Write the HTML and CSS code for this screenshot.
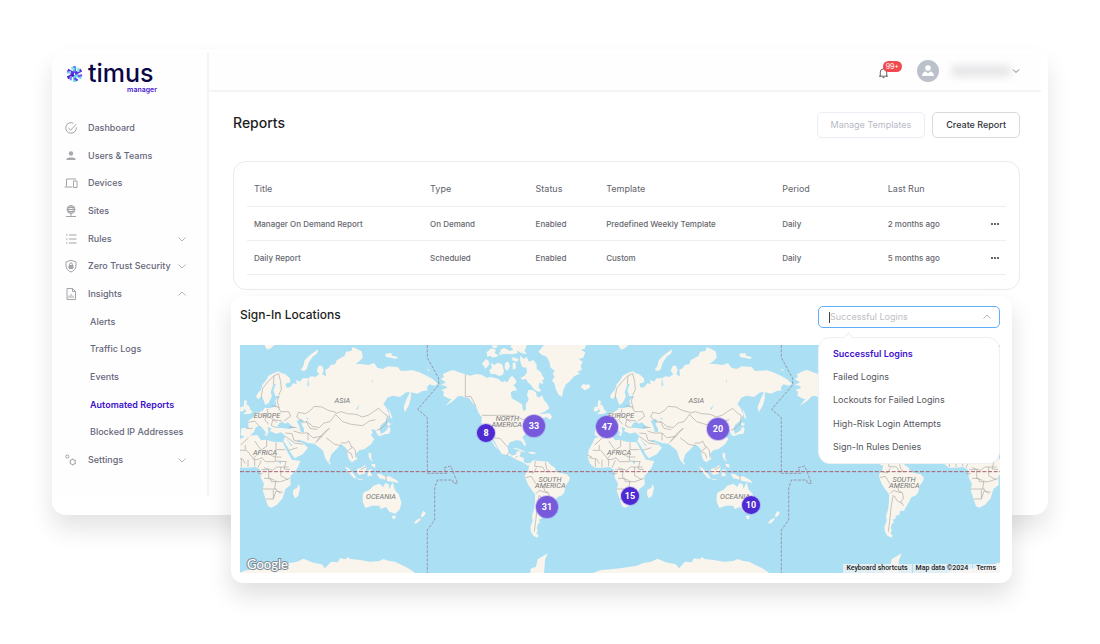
FILE: index.html
```html
<!DOCTYPE html>
<html lang="en">
<head>
<meta charset="utf-8">
<meta name="viewport" content="width=device-width, initial-scale=1">
<title>Timus Manager – Reports</title>
<link rel="stylesheet" href="styles.css">
</head>
<body>
<div class="stage">
  <div class="app">
    <aside class="sidebar">
      <a class="logo" href="#">
        <svg class="logo-mark" viewBox="0 0 54 56" aria-hidden="true">
          <g stroke-width="10" fill="none">
            <path d="M27 25V3" stroke="#6a7df0"/><path d="M27 31V53" stroke="#62dfe2"/>
            <path d="M25 27L5 16" stroke="#5a34e0"/><path d="M29 29L49 40" stroke="#6fd4ee"/>
            <path d="M25 29L5 40" stroke="#4a24c8"/><path d="M29 27L49 16" stroke="#5a34e0"/>
          </g>
          <g stroke-width="7" fill="none">
            <path d="M17 7l10 8" stroke="#78e8e6"/><path d="M27 41l10 8" stroke="#5b48e8"/>
            <path d="M3 25l13-4" stroke="#86c8f4"/><path d="M38 35l13-4" stroke="#7a5af0"/>
            <path d="M15 34v14" stroke="#8b7bf5"/><path d="M39 22V8" stroke="#86eee0"/>
          </g>
        </svg>
        <span class="logo-text">timus</span>
        <span class="logo-sub">manager</span>
      </a>
      <nav>
        <ul class="nav">
          <li><a href="#"><svg viewBox="0 0 14 14"><path d="M12.3 6.3A5.3 5.3 0 1 1 9.4 2.200M4.400 7l2.200 2.200L12.300 3.200"/></svg>Dashboard</a></li>
          <li><a href="#"><svg class="solid" viewBox="0 0 14 14"><circle cx="7" cy="4.500" r="2.200"/><path d="M2.500 11V10c0-2 9-2 9 0v1z"/></svg>Users &amp; Teams</a></li>
          <li><a href="#"><svg viewBox="0 0 14 14"><path d="M12 3H2.500v7.500M.5 11H8.500M9.500 5h3.500v6.500H9.500z"/></svg>Devices</a></li>
          <li><a href="#"><svg viewBox="0 0 14 14"><circle cx="7" cy="5.500" r="4"/><path d="M3 5.500h8M4 3.500h6M4 7.500h6M7 1.500c-3 2-3 6 0 8 3-2 3-6 0-8M7 9.500v3M2 12.500h10"/></svg>Sites</a></li>
          <li><a href="#"><svg viewBox="0 0 14 14"><path d="M5 3h7.500M5 7h7.500M5 11h7.500M2 3h1.500M2 7h1.500M2 11h1.500"/></svg>Rules<svg class="chev" viewBox="0 0 10 10"><path d="M1.500 3.500L5 7l3.500-3.500"/></svg></a></li>
          <li><a href="#"><svg viewBox="0 0 14 14"><path d="M7 1.200L12 3v4c0 3-2.500 5-5 6-2.500-1-5-3-5-6V3z"/><path class="fill" d="M5 6.500h4v3H5z"/><path d="M5.700 6.500V5c0-1.500 2.600-1.500 2.600 0v1.500"/></svg>Zero Trust Security<svg class="chev" viewBox="0 0 10 10"><path d="M1.500 3.500L5 7l3.500-3.500"/></svg></a></li>
          <li><a href="#"><svg viewBox="0 0 14 14"><path d="M3 1.500h5.500L11.500 4.500v8H3zM8.500 1.500v3h3M5 11V8.500M7 11V7M9 11V8.500"/></svg>Insights<svg class="chev" viewBox="0 0 10 10"><path d="M1.500 6.500L5 3l3.500 3.500"/></svg></a></li>
          <li class="sub"><a href="#">Alerts</a></li>
          <li class="sub"><a href="#">Traffic Logs</a></li>
          <li class="sub"><a href="#">Events</a></li>
          <li class="sub current"><a href="#" aria-current="page">Automated Reports</a></li>
          <li class="sub"><a href="#">Blocked IP Addresses</a></li>
          <li><a href="#"><svg viewBox="0 0 14 14"><circle cx="3.300" cy="3.500" r="1.600"/><circle cx="8.700" cy="9" r="2.600"/><path d="M8.700 5.500v1M8.700 11.500v1M5.700 7.300l.8.400M10.900 10.300l.9.500M5.700 10.800l.8-.5M10.900 7.700l.9-.5"/></svg>Settings<svg class="chev" viewBox="0 0 10 10"><path d="M1.500 3.500L5 7l3.500-3.500"/></svg></a></li>
        </ul>
      </nav>
    </aside>
    <div class="content">
      <header class="topbar">
        <button class="bell" aria-label="Notifications">
          <svg viewBox="0 0 12 13"><path d="M1 10h10M2.500 10V5.500a3.500 3.500 0 0 1 7 0V10M5 11.500h2M6 1v1"/></svg>
          <span class="badge">99+</span>
        </button>
        <button class="account" aria-label="Account">
          <svg class="avatar" viewBox="0 0 22 22"><circle cx="11" cy="11" r="11" fill="#bcc0ca"/><circle cx="11" cy="8" r="2.800" fill="#fff"/><path d="M5 16c0-3 2-4.300 4-4.500l2 2 2-2c2 .2 4 1.500 4 4.500z" fill="#fff"/></svg>
          <span class="masked"></span>
          <svg class="chev dark" viewBox="0 0 10 10"><path d="M2 3.500L5 6.500l3-3"/></svg>
        </button>
      </header>
      <main class="main">
        <div class="heading">
          <h1>Reports</h1>
          <div class="actions">
            <button class="btn" disabled>Manage Templates</button>
            <button class="btn">Create Report</button>
          </div>
        </div>
        <section class="table-card">
          <table>
            <thead><tr><th class="c-wide">Title</th><th class="c-mid">Type</th><th class="c-slim">Status</th><th class="c-wide">Template</th><th class="c-mid">Period</th><th>Last Run</th><td class="c-more"></td></tr></thead>
            <tbody>
              <tr><td>Manager On Demand Report</td><td>On Demand</td><td>Enabled</td><td>Predefined Weekly Template</td><td>Daily</td><td>2 months ago</td><td><button class="more" aria-label="More actions"><i></i><i></i><i></i></button></td></tr>
              <tr><td>Daily Report</td><td>Scheduled</td><td>Enabled</td><td>Custom</td><td>Daily</td><td>5 months ago</td><td><button class="more" aria-label="More actions"><i></i><i></i><i></i></button></td></tr>
            </tbody>
          </table>
        </section>
      </main>
    </div>
  </div>

  <section class="panel">
    <div class="panel-head">
      <h2>Sign-In Locations</h2>
      <div class="combo">
        <label class="combo-field">
          <span class="caret"></span>
          <input type="text" role="combobox" aria-expanded="true" aria-controls="login-menu" aria-label="Login type" placeholder="Successful Logins">
          <svg class="chev" viewBox="0 0 10 10"><path d="M1.500 6.500L5 3l3.500 3.500"/></svg>
        </label>
        <ul class="menu" id="login-menu">
          <li><button class="chosen">Successful Logins</button></li>
          <li><button>Failed Logins</button></li>
          <li><button>Lockouts for Failed Logins</button></li>
          <li><button>High-Risk Login Attempts</button></li>
          <li><button>Sign-In Rules Denies</button></li>
        </ul>
      </div>
    </div>
    <div class="map">
      <svg class="world" viewBox="0 0 2280 684" preserveAspectRatio="xMinYMin slice" role="img" aria-label="World map">
        <defs>
          <g id="tile">
            <!-- The Americas -->
            <g transform="translate(540 -30)">
              <g class="land">
                <path d="M62 132L72 125 68 118 88 108 100 105 112 110 136 118 150 122 168 117 185 119 200 128 215 126 235 132 247 142 255 138 262 142 270 128 276 122 284 130 290 142 279 152 283 164 272 172 275 190 290 198 306 208 310 228 318 224 317 208 326 194 321 180 325 165 338 165 348 172 350 184 358 188 366 180 372 196 380 204 388 220 374 230 356 236 368 236 384 236 396 246 390 254 380 246 368 250 355 256 340 262 334 275 325 281 318 295 307 306 318 328 314 334 304 318 290 315 270 322 262 335 266 352 275 362 286 359 292 349 303 349 299 365 311 368 312 382 322 385 333 384 324 392 308 382 285 372 270 362 245 356 232 335 222 315 213 308 225 328 235 345 224 334 212 312 200 302 188 280 184 262 186 247 175 232 168 215 156 202 148 190 138 188 125 183 113 184 108 190 96 200 76 213 94 193 84 190 70 182 72 170 64 165 82 158 76 152 62 150 78 142z"/>
                <path d="M328 386L340 375 350 377 365 378 385 381 392 390 405 398 408 410 422 414 440 418 450 428 446 440 436 452 433 472 426 481 412 487 405 500 396 516 390 527 378 528 376 540 364 542 366 550 356 554 360 562 354 566 350 580 354 586 349 594 356 602 352 608 340 602 333 590 331 576 338 558 336 542 342 524 345 500 345 478 336 466 325 450 314 425 319 412 325 405z"/>
                <path d="M372 30H498L494 42 482 44 496 52 490 68 476 72 488 80 482 92 486 104 472 110 480 116 462 124 448 140 438 148 430 165 426 185 416 180 408 164 404 148 396 136 404 126 398 116 404 108 392 98 388 80 380 65 366 60 355 50z"/>
                <path d="M485 152l4-5 9 2 9-1 4 7-6 6-11 5-7-6-4-1zM300 62l12 10 8-6 7 14 14-5 9 14 0 13 12 10 6 12 6 8-8 4 4 12-12-5-2 14 8 11-10 2-13-8-8-12-10-8-4-10-12 2-5-6 12-6 7-10-2-14-12-2-6-16zM212 84l12 6 8-7 14 5 6 20-4 12-12 3-10-6-14 0-4-12 8-6zM186 86l12-14 8 6 2 10-12 14-4-8zM255 84l10-4 5 14-8 14-8-8zM278 84l8-2 2 18-10 4zM240 46l12-8 18 10 16-6 8 12-18 4-16-2-14 2zM200 52l14-12 14 4-4 10 12 8-16 6-10-6-8 4zM278 66l18 6-4 8-16-4zM270 34l8-4h42l-6 18 6 10-16-4-10-6-8 2zM215 31h18l-4 9-10-2zM236 52l10 2-4 8zM272 148l12 6 8 12-12 2zM278 340l10-1 14 5 17 6-12 0-14-6zM322 352l14-2 14 5-12 3zM174 230l8 4 8 12-7-2zM378 234l12 2 8 12-12-4zM330 717l2-16 16-6 5-22 30-18-8 20-3 42z"/>
              </g>
              <g class="border">
                <path d="M136 118V186L152 184 168 214M186 241H285L310 255 325 247 345 240M214 308L240 310 262 335M260 362l8-12M285 370l8-8M346 378l-2 16 24 2 8 14 18 0M322 410l18 4 10-16M376 382l4 20 8 6M316 428l18-4 12 20M346 446l24 6 4 16 12 6 2 16-8 12 10 10M348 476l10-10 16 6 10 0M358 480l-6 30-4 40-5 40M385 505l-16-8-8-14"/>
              </g>
              <g class="place"><text x="262" y="257">NORTH</text><text x="260" y="277">AMERICA</text><text x="390" y="440">SOUTH</text><text x="391" y="459">AMERICA</text></g>
            </g>
            <!-- Europe, Africa, Asia, Oceania -->
            <g transform="translate(1080 -30)">
              <g class="land">
                <path d="M30 186L34 176 45 164 50 148 60 136 68 122 84 114 98 109 106 114 118 118 132 130 133 142 118 146 122 158 134 156 142 144 152 148 150 134 162 140 170 130 186 130 196 124 208 126 220 118 212 108 218 92 228 92 233 104 229 118 240 124 238 104 248 100 254 90 268 88 272 76 296 62 300 50 316 48 320 36 334 42 348 50 350 68 338 80 328 86 350 88 368 90 384 84 394 98 410 102 425 94 455 96 465 108 500 106 520 112 542 122 560 132 576 146 566 152 550 148 542 158 546 166 530 168 514 176 495 172 494 192 488 212 476 232 473 215 482 192 492 172 480 172 462 186 440 182 424 188 412 208 420 216 430 238 422 256 405 270 400 282 405 296 396 302 388 285 376 282 380 294 374 300 385 312 375 328 356 342 340 346 330 356 334 372 320 380 326 384 312 378 306 366 302 342 294 334 285 328 272 342 256 358 248 384 240 374 230 346 206 326 186 324 160 314 150 318 170 324 186 338 170 358 146 370 136 356 124 335 112 318 118 304 106 292 90 296 72 288 76 280 64 276 68 292 62 298 54 284 42 272 30 276 24 290 10 304 -4 306 -16 300 -14 280 8 278 6 258 22 246 36 234 52 226 56 218 70 220 92 214 88 196 104 182 88 184 82 166 90 146 82 148 74 172 78 184 68 204 58 210 48 184 38 192z"/>
                <path d="M-16 310L10 302 34 300 45 316 62 314 78 320 110 322 124 350 138 374 163 378 154 400 133 424 134 450 118 462 110 490 92 510 76 518 66 514 58 490 50 465 54 446 45 430 42 404 28 396 6 398 -16 398 -30 386 -37 368 -34 345 -22 324z"/>
                <path d="M350 480L354 472 370 465 382 452 400 446 412 456 418 444 428 448 430 462 440 442 446 464 458 478 466 502 462 522 448 536 430 530 420 516 404 522 400 512 378 512 358 519 350 500zM438 542l12 1-4 10-6-2zM532 527l8 8-10 12-6-4zM526 548l-6 10-10 8-6-2 8-10zM392 416l14 2 8 6 16 0 22 12 6 8-18-4-14-2-14-6-12-2zM296 394l12 6 16 18 8 12-8 0-14-16zM328 430l26 4-10 2zM333 402l14-4 10-8 5 8-6 18-16 4-8-8zM365 406l14-4-6 8 6 14-8-2-6 4zM368 352l8 4 0 16 6 8-8-4-6-10zM376 386l12 2 0 10-10-4zM428 274l6 8-4 14-14 2-14 6-4-4 16-8 8-6zM428 220l6 14 6 20-8-8zM425 262l10 4-4 6-8-2zM142 464l12-6 4-12 4 14-6 24-10 6-5-12zM248 378l7 6-5 6zM164 104l8-10 4-18 16-16 24-17-2 12-14 10-12 18-6 20-8 6zM418 56l18-2 2 8 18 4-6 6-16-4-14-2zM55 30h30l-10 10-12 4zM-5 195l8 3-2 10 8 5 4 12 8 5-8 6-22 2 10-10-8-12zM-16 215l10 0 2 10-10 6-5-5zM54 296l12 2-4 6zM542 102l10 2-4 4z"/>
                <path d="M-30 717L0 706 60 700 110 692 130 684 154 680 172 671 184 676 197 682 227 688 237 700 255 680 275 682 282 670 300 673 305 666 314 672 342 675 372 680 400 678 412 672 430 678 447 680 487 700 512 717z"/>
              </g>
              <g class="sea">
                <path d="M92 278l8-14 10-4 6 6 10-4 8 8 12 8-16 4-14-2zM152 258l14-6 8 6-8 8 8 16 0 10-10-2-4-16zM186 128l4 22-6 6zM120 310l20 22 -4 2zM330 222l12-14-8 16zM378 132l4 10-4-2zM180 250l8-2-2 6z"/>
                <path d="M96 380l10-2-2 10z"/>
              </g>
              <g class="border">
                <path d="M45 190L50 160 66 140 84 122 98 116 104 140 106 164 98 180M84 122l-2 26M98 184l-4 16 6 20M76 212l20 4 8 14 24 0 6 14-20 14M36 232l16 12 14-4 14 14 28 4M64 222l2 18-10 14 12 14M6 262l20-4 14 16M80 254l-4 18 16 6M92 262l-12-10M0 280l20 0M152 246l6-14 20 4 16-10 10-12 24 2 18 10 24 6M152 246l20 16 12-2 16 14 20 4 14-14 18-4 20-26 14-4 18 6 26 2 20 8 18-6 14-10 16-10 14 14 12 8-4 26-18 14-10 4M270 240l20 20 26 8 34 4 20-14 18-4M128 276l24 2M142 288l20 6 24 0 14 14 28-4 12-14 10-10M186 294l0 22M228 304l-20 20M240 308l26 20 20 4M212 318l20-24 18-14M180 258l12 22 22 4M284 324l16 0 8-6 10 20-16 12M318 334l10 12 2 22M118 294l20 2 6 20 18 4M118 304l28 20 26 4M128 346l26-8M304 350l12 6 4 14"/>
                <path d="M-16 330l24-22M-22 346l24 0 20 24 24-24-20-28M-2 344v-14M44 346l18-12 0-20M90 322V344H118M46 346l40 20 20 0M88 344v34l34 2M20 372l14 2 14-6 10 12 30 0M-34 368l24 4 8 14M-14 372v24M6 374v22M26 372v22M46 376l-10 22M-38 360l14 6M54 398l26 8 12-10 36 0M46 404l22 0 0 26 18 6M54 430H74l2 10 28 0M104 396v26l22 12M104 440l28-10M50 462H92M90 436l-4 24 18 16M60 492h22l8-24 20 4M82 492v-28M120 380l-6 22 18 2M36 416h14M344 404l16-8M420 420v16"/>
              </g>
              <g class="place"><text x="289" y="205">ASIA</text><text x="63" y="250">EUROPE</text><text x="57" y="360">AFRICA</text><text x="405" y="493">OCEANIA</text></g>
              <path class="dateline" d="M544 30V68L578 130V150L515 223 544 248V415H602L594 398 614 393 635 445H622L620 435H574L566 460V555L544 585V717"/>
            </g>
          </g>
        </defs>
        <use href="#tile" x="-2124"/><use href="#tile" x="-1062"/><use href="#tile"/><use href="#tile" x="1062"/>
        <path class="equator" d="M0 380H2280"/>
      </svg>
      <button class="pin small" style="left:246px;top:88px">8</button>
      <button class="pin" style="left:294px;top:81px">33</button>
      <button class="pin" style="left:307px;top:162px">31</button>
      <button class="pin" style="left:367px;top:82px">47</button>
      <button class="pin" style="left:478px;top:84px">20</button>
      <button class="pin small" style="left:390px;top:151px">15</button>
      <button class="pin small" style="left:511px;top:160px">10</button>
      <span class="google">Google</span>
      <div class="credits"><button>Keyboard shortcuts</button><span>Map data ©2024</span><a href="#">Terms</a></div>
    </div>
  </section>
</div>
</body>
</html>
```
FILE: styles.css
```css
* { box-sizing: border-box; }
body { margin: 0; background: #fff; color: #55565e; font: 9px/14px Inter, "Open Sans", sans-serif; }
ul { list-style: none; margin: 0; padding: 0; }
a { color: inherit; text-decoration: none; }
button { font: inherit; color: inherit; background: none; border: 0; padding: 0; }
h1, h2 { margin: 0; color: #1d1d22; font-weight: 500; }
svg { display: block; }

.stage { display: grid; grid-template-rows: 246px 219px auto; padding: 50px 52px 60px; }
.app { grid-area: 1 / 1 / 3 / 2; display: flex; background: #fff; border-radius: 14px; box-shadow: 0 14px 24px rgba(0, 0, 0, .11); padding: 2px 7px 19px 0; }
.sidebar { width: 157px; flex: none; background: #fefefe; border-right: 2px solid #f4f4f6; border-top-left-radius: 14px; }
.content { flex: 1; min-width: 0; }

.logo { display: grid; grid-template-columns: 17px 69px; column-gap: 5px; align-items: center; padding: 8px 0 0 14px; }
.logo-mark { width: 17px; height: 18px; margin-top: 2px; }
.logo-text { font: 500 25px/26px Inter, sans-serif; color: #0b0646; }
.logo-sub { grid-column: 2; justify-self: end; color: #4a20d0; font-size: 7px; line-height: 8px; font-weight: 600; }

.nav { display: grid; grid-auto-rows: 1fr; min-height: 360px; margin-top: 20px; color: #66667a; font-weight: 500; }
.nav a { display: flex; align-items: center; height: 100%; padding: 0 20px 0 12px; }
.nav svg { width: 14px; height: 14px; margin-right: 10px; fill: none; stroke: #a3a3a9; stroke-width: 1; }
.nav svg.solid { fill: #a8a8ae; stroke: none; }
.nav .fill { fill: #a3a3a9; }
.nav .chev { margin: 0 0 0 auto; }
.chev, .nav .chev { width: 10px; height: 10px; fill: none; stroke: #b5b5bd; stroke-width: 1; }
.chev.dark { stroke: #777; }
.nav .sub a { padding-left: 38px; }
.nav .current { color: #3d10cc; font-weight: 600; }

.topbar { display: flex; justify-content: flex-end; align-items: center; gap: 15px; height: 40px; border-bottom: 2px solid #f4f4f6; padding-right: 20px; background: #fefefe; }
.bell { display: flex; }
.bell svg { width: 11px; height: 12px; fill: none; stroke: #555; margin-top: 3px; }
.badge { background: #f0494e; color: #fff; border-radius: 6px; font-size: 7px; line-height: 11px; height: 11px; padding: 0 3px; margin: -3px 0 0 -6px; z-index: 1; }
.account { display: flex; align-items: center; gap: 13px; }
.avatar { width: 22px; height: 22px; }
.masked { width: 58px; height: 10px; background: #e2e2e4; filter: blur(4px); }
.account .chev { margin-left: -12px; }

.main { padding: 20px 21px 0 24px; }
.heading { display: flex; justify-content: space-between; align-items: flex-start; }
h1 { font-size: 14px; line-height: 22px; }
.actions { display: flex; gap: 7px; }
.btn { height: 26px; padding: 0 13px; border: 1px solid #d9d9e0; border-radius: 5px; color: #33343b; background: #fff; font-weight: 500; }
.btn:disabled { border-color: #ececf4; color: #b9bac6; font-weight: 400; }

.table-card { margin-top: 23px; border: 1px solid #ebebef; border-radius: 13px; padding: 10px 13px 14px; }
table { width: 100%; border-collapse: collapse; table-layout: fixed; }
th, td { height: 34px; padding: 0 0 0 7px; text-align: left; font-weight: 400; border-bottom: 1px solid #ededf3; }
td { padding-top: 1px; font-size: 8px; font-weight: 500; color: #66676e; }
th { color: #63646c; }
.c-wide { width: 23.2%; }
.c-mid { width: 13.9%; }
.c-slim { width: 9.3%; }
.c-more { width: 22px; }
.more { display: flex; gap: 1px; padding: 4px 0; }
.more i { width: 2px; height: 2px; border-radius: 1px; background: #333; }

.panel { grid-area: 2 / 1 / 4 / 2; margin: 0 36px 0 179px; padding: 10px 12px 10px 9px; background: #fff; border-radius: 12px; box-shadow: 0 12px 24px rgba(0, 0, 0, .13); z-index: 1; }
.panel-head { display: flex; justify-content: space-between; padding-bottom: 17px; }
h2 { font-size: 12px; line-height: 18px; }
.combo { position: relative; width: 182px; }
.combo-field { display: flex; align-items: center; height: 22px; border: 1px solid #62aef8; border-radius: 5px; padding: 0 7px 0 10px; }
.caret { width: 1px; height: 11px; background: #444; }
.combo-field input { flex: 1; min-width: 0; border: 0; outline: 0; padding: 0; background: none; font: inherit; }
.combo-field input::placeholder { color: #bdbdc4; opacity: 1; }
.menu { position: absolute; z-index: 3; top: 31px; left: 0; right: 0; padding: 4px 14px; background: #fff; border: 1px solid #efeff5; border-radius: 12px; min-height: 127px; display: grid; grid-auto-rows: 1fr; }
.menu::before { content: ""; position: absolute; top: -4px; left: 26px; width: 6px; height: 6px; background: #fff; border: solid #efeff5; border-width: 1px 0 0 1px; transform: rotate(45deg); }
.menu button { height: 100%; }
.menu .chosen { color: #3d10cc; font-weight: 600; }

.map { position: relative; height: 228px; overflow: hidden; background: #abdff3; }
.world { width: 100%; height: 100%; }
.land { fill: #f9f5ed; }
.sea { fill: #abdff3; }
.border { fill: none; stroke: #aaa9a8; stroke-width: 2; stroke-linejoin: round; }
.dateline, .equator { fill: none; stroke: #8e7485; stroke-width: 2; stroke-dasharray: 9 4; }
.equator { stroke: #a7606f; stroke-width: 3; stroke-dasharray: 12 5; }
.place { font: italic 22px Roboto, sans-serif; fill: #777; text-anchor: middle; paint-order: stroke; stroke: #f9f5ed; stroke-width: 2; }
.pin { position: absolute; width: 22px; height: 22px; transform: translate(-50%, -50%); border-radius: 50%; background: #7759db; color: #fff; font: 700 9px/22px Roboto, sans-serif; box-shadow: 0 0 0 1px rgba(150, 125, 235, .4); }
.pin.small { width: 18px; height: 18px; line-height: 18px; background: #4e2ad2; }
.google { position: absolute; left: 7px; bottom: 1px; font: 500 13px/16px Lato, sans-serif; color: #fff; -webkit-text-stroke: 2px #7d8c96; paint-order: stroke; }
.credits { position: absolute; right: 0; bottom: 0; display: flex; gap: 1px; font: 500 7px/9px Roboto, sans-serif; color: #222; }
.credits > * { background: rgba(245, 245, 245, .72); padding: 0 4px 0 3px; }
```
